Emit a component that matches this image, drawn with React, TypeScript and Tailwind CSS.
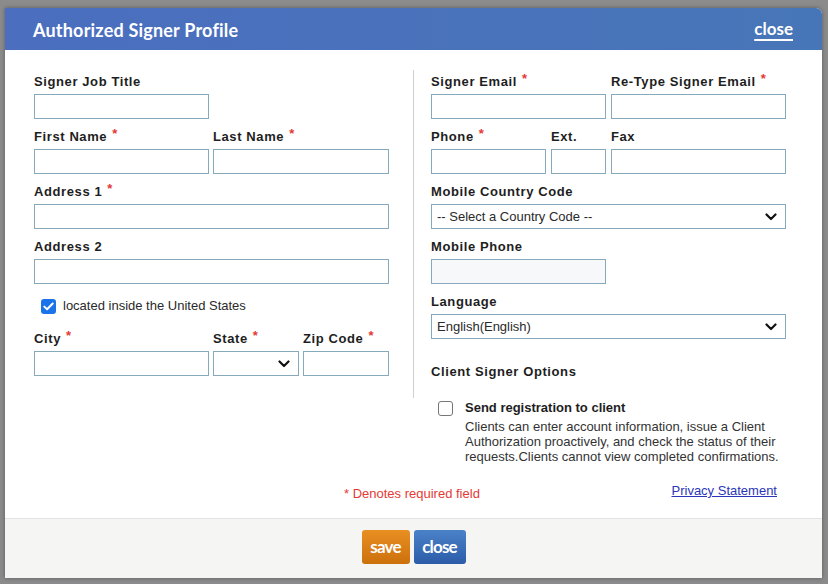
import React from "react";

const Star = () => (
  <span className="relative -top-[3px] ml-[5px] text-[13px] font-bold text-[#e53935]">*</span>
);

const Label = ({ text, req }: { text: string; req?: boolean }) => (
  <div className="h-4 whitespace-nowrap text-[13px] font-bold leading-4 tracking-[0.6px] text-[#1e1e1e]">
    {text}
    {req && <Star />}
  </div>
);

const Input = ({ className = "", disabled }: { className?: string; disabled?: boolean }) => (
  <input
    type="text"
    disabled={disabled}
    className={`h-[25px] border border-[#86aabb] px-1.5 text-[13px] outline-none ${
      disabled ? "bg-[#f7f8f9]" : "bg-white"
    } ${className}`}
  />
);

const Chevron = () => (
  <svg width="12" height="8" viewBox="0 0 12 8" className="pointer-events-none absolute right-[9px] top-[9px]">
    <path d="M1.5 1.5 L6 6 L10.5 1.5" fill="none" stroke="#111" strokeWidth="2.2" strokeLinecap="round" strokeLinejoin="round" />
  </svg>
);

const Select = ({ className = "", value }: { className?: string; value: string }) => (
  <div className={`relative h-[25px] ${className}`}>
    <select
      defaultValue={value}
      className="h-full w-full appearance-none border border-[#86aabb] bg-white pl-[5px] text-[13px] text-[#2a2a2a] outline-none"
    >
      <option value={value}>{value}</option>
    </select>
    <Chevron />
  </div>
);

const Field = ({
  label,
  req,
  children,
  className = "",
}: {
  label: string;
  req?: boolean;
  children: React.ReactNode;
  className?: string;
}) => (
  <div className={`flex flex-col gap-1 ${className}`}>
    <Label text={label} req={req} />
    {children}
  </div>
);

export default function App() {
  return (
    <div
      className="min-h-[584px] w-[828px] bg-[#8b8b8b] pl-[5px] pt-[8px]"
      style={{ fontFamily: '"Liberation Sans", Arial, sans-serif' }}
    >
      <div className="flex h-[570px] w-[817px] flex-col overflow-hidden rounded-tr-[6px] bg-white shadow-[0_0_4px_rgba(0,0,0,0.35)]">
        {/* header */}
        <div className="flex h-[42px] items-center justify-between bg-gradient-to-r from-[#4b6ebf] to-[#4776b8] pl-[28px] pr-[29px]">
          <div
            className="pt-[2px] text-[18px] font-bold tracking-[0.2px] text-white"
            style={{ fontFamily: "Lato, sans-serif" }}
          >
            Authorized Signer Profile
          </div>
          <a
            href="#"
            className="text-[17px] font-bold text-white underline decoration-[1.5px] underline-offset-[4px]"
            style={{ fontFamily: "Lato, sans-serif" }}
          >
            close
          </a>
        </div>

        {/* body */}
        <div className="flex flex-1 flex-col">
          <div className="flex pl-[29px] pt-[24px]">
            {/* left column */}
            <div className="flex w-[355px] flex-col">
              <Field label="Signer Job Title">
                <Input className="w-[175px]" />
              </Field>
              <div className="mt-[10px] flex gap-1">
                <Field label="First Name" req className="w-[175px]">
                  <Input className="w-full" />
                </Field>
                <Field label="Last Name" req className="w-[176px]">
                  <Input className="w-full" />
                </Field>
              </div>
              <Field label="Address 1" req className="mt-[10px]">
                <Input className="w-full" />
              </Field>
              <Field label="Address 2" className="mt-[10px]">
                <Input className="w-full" />
              </Field>
              <label className="mt-[14px] flex h-4 items-center pl-[7px]">
                <span className="flex h-[15px] w-[15px] items-center justify-center rounded-[3px] bg-[#1a73e8]">
                  <svg width="11" height="9" viewBox="0 0 11 9">
                    <path d="M1.3 4.6 L4.1 7.3 L9.7 1.5" fill="none" stroke="#fff" strokeWidth="2" strokeLinecap="round" strokeLinejoin="round" />
                  </svg>
                </span>
                <span className="ml-[7px] text-[13px] text-[#2a2a2a]">located inside the United States</span>
              </label>
              <div className="mt-[17px] flex gap-1">
                <Field label="City" req className="w-[175px]">
                  <Input className="w-full" />
                </Field>
                <Field label="State" req className="w-[86px]">
                  <Select value="" className="w-full" />
                </Field>
                <Field label="Zip Code" req className="w-[86px]">
                  <Input className="w-full" />
                </Field>
              </div>
            </div>

            {/* divider */}
            <div className="ml-[24px] mt-[-4px] h-[328px] w-px bg-[#cfcfcf]" />

            {/* right column */}
            <div className="ml-[17px] flex w-[355px] flex-col">
              <div className="flex gap-[5px]">
                <Field label="Signer Email" req className="w-[175px]">
                  <Input className="w-full" />
                </Field>
                <Field label="Re-Type Signer Email" req className="w-[175px]">
                  <Input className="w-full" />
                </Field>
              </div>
              <div className="mt-[10px] flex gap-[5px]">
                <Field label="Phone" req className="w-[115px]">
                  <Input className="w-full" />
                </Field>
                <Field label="Ext." className="w-[55px]">
                  <Input className="w-full" />
                </Field>
                <Field label="Fax" className="w-[175px]">
                  <Input className="w-full" />
                </Field>
              </div>
              <Field label="Mobile Country Code" className="mt-[10px]">
                <Select value="-- Select a Country Code --" className="w-full" />
              </Field>
              <Field label="Mobile Phone" className="mt-[10px]">
                <Input className="w-[175px]" disabled />
              </Field>
              <Field label="Language" className="mt-[10px]">
                <Select value="English(English)" className="w-full" />
              </Field>
              <div className="mt-[25px]">
                <Label text="Client Signer Options" />
              </div>
              <label className="mt-[20px] flex h-4 items-center pl-[7px]">
                <span className="h-[15px] w-[15px] rounded-[3px] border border-[#767676] bg-white" />
                <span className="ml-[12px] text-[13px] font-bold text-[#1e1e1e]">Send registration to client</span>
              </label>
              <p className="ml-[34px] mt-[3px] text-[13px] leading-[15px] text-[#333]">
                Clients can enter account information, issue a Client Authorization proactively, and check the status of
                their requests.Clients cannot view completed confirmations.
              </p>
            </div>
          </div>

          {/* bottom row */}
          <div className="mt-[17px] flex items-start">
            <div className="ml-[339px] mt-[3px] text-[13px] text-[#e53935]">* Denotes required field</div>
            <a href="#" className="ml-auto mr-[45px] text-[13px] text-[#2a35b8] underline">
              Privacy Statement
            </a>
          </div>
        </div>

        {/* footer */}
        <div className="flex h-[60px] items-start justify-center gap-1 border-t border-[#e3e3e3] bg-[#f5f5f3] pt-[11px]">
          <button
            className="h-[34px] w-[48px] rounded-[3px] bg-gradient-to-b from-[#e88f22] to-[#cc700c] text-[17px] font-bold tracking-[-0.8px] text-white"
            style={{ fontFamily: "Lato, sans-serif" }}
          >
            save
          </button>
          <button
            className="h-[34px] w-[52px] rounded-[3px] bg-gradient-to-b from-[#4a82c8] to-[#2c5ca8] text-[17px] font-bold tracking-[-0.8px] text-white"
            style={{ fontFamily: "Lato, sans-serif" }}
          >
            close
          </button>
        </div>
      </div>
    </div>
  );
}
